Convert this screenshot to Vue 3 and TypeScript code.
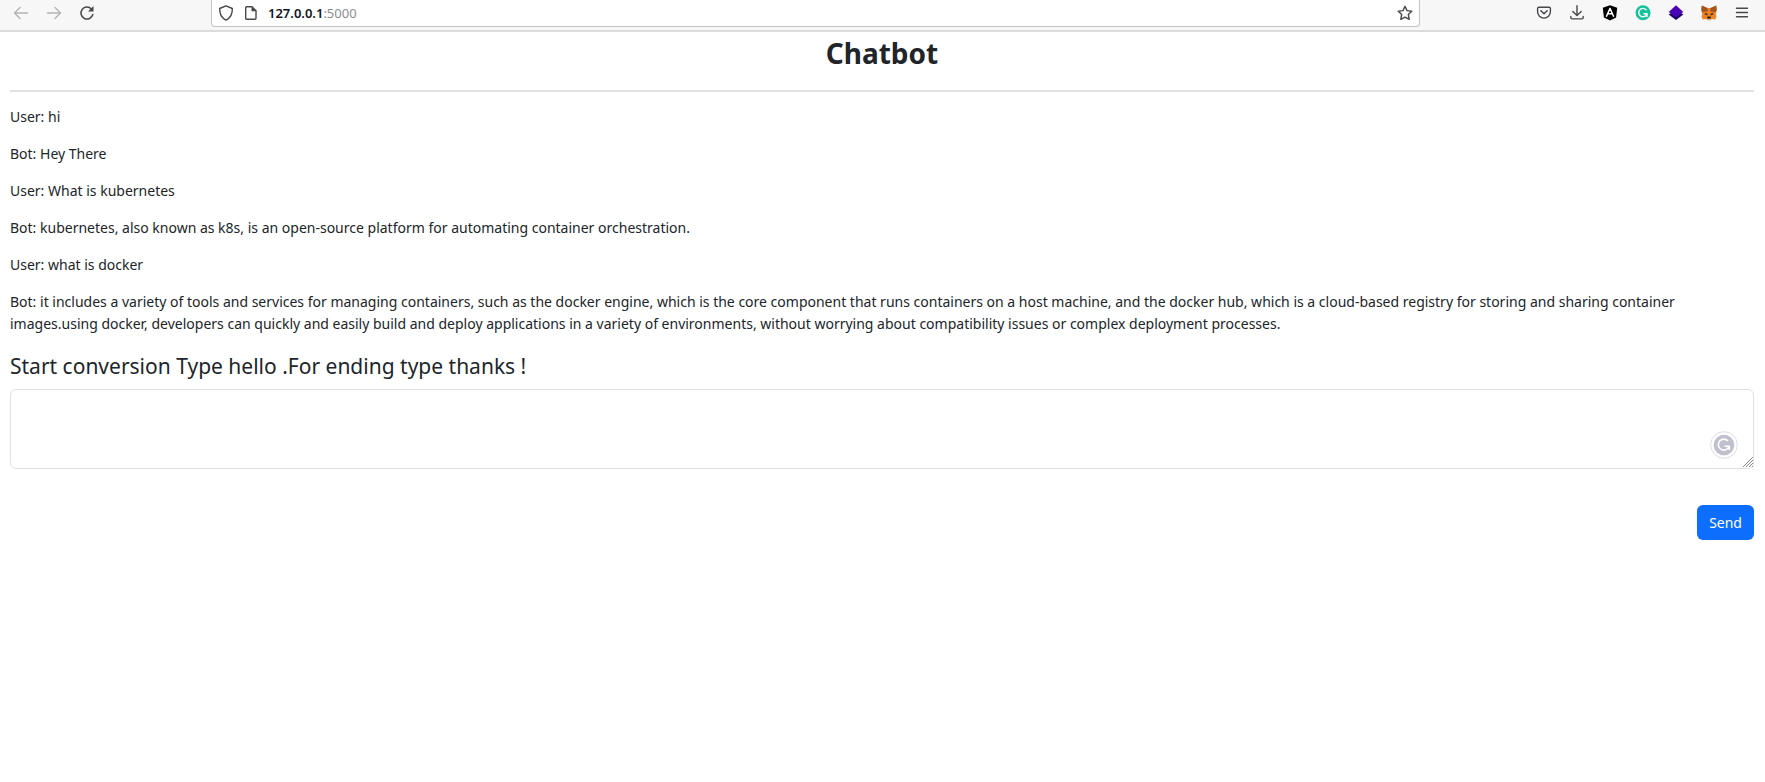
<script setup lang="ts">
import { ref } from 'vue'

interface Message {
  from: 'User' | 'Bot'
  text: string
}

const messages = ref<Message[]>([
  { from: 'User', text: 'hi' },
  { from: 'Bot', text: 'Hey There' },
  { from: 'User', text: 'What is kubernetes' },
  {
    from: 'Bot',
    text: 'kubernetes, also known as k8s, is an open-source platform for automating container orchestration.',
  },
  { from: 'User', text: 'what is docker' },
  {
    from: 'Bot',
    text: 'it includes a variety of tools and services for managing containers, such as the docker engine, which is the core component that runs containers on a host machine, and the docker hub, which is a cloud-based registry for storing and sharing container images.using docker, developers can quickly and easily build and deploy applications in a variety of environments, without worrying about compatibility issues or complex deployment processes.',
  },
])
const draft = ref('')

function send() {
  const text = draft.value.trim()
  if (!text) return
  messages.value.push({ from: 'User', text })
  draft.value = ''
}
</script>

<template>
  <div class="window">
    <header class="toolbar">
      <nav class="nav" aria-label="Navigation">
        <button class="tool dim" type="button" aria-label="Back">
          <svg viewBox="0 0 16 16"><path d="M14.5 8h-13M7 2.5 1.5 8 7 13.5" /></svg>
        </button>
        <button class="tool dim" type="button" aria-label="Forward">
          <svg viewBox="0 0 16 16"><path d="M1.5 8h13M9 2.5 14.5 8 9 13.5" /></svg>
        </button>
        <button class="tool" type="button" aria-label="Reload">
          <svg viewBox="0 0 16 16">
            <path d="M13.8 9.5A6 6 0 1 1 12.4 4" stroke-width="1.5" />
            <path d="M14.5 1v5.500H9z" class="solid" />
          </svg>
        </button>
      </nav>

      <div class="address">
        <button class="tool" type="button" aria-label="Tracking protection">
          <svg viewBox="0 0 16 16">
            <path d="M8 .9 14.3 3.500C14.600 9 12 13 8 15.200 4 13 1.400 9 1.700 3.500z" />
          </svg>
        </button>
        <button class="tool" type="button" aria-label="Site information">
          <svg viewBox="0 0 16 16">
            <path d="M3.700 1.700H9l4 4v7.600a1 1 0 0 1-1 1H3.700a1 1 0 0 1-1-1V2.700a1 1 0 0 1 1-1z" />
            <path d="M8.500 1.500 13.300 6.300H8.500z" class="solid" />
          </svg>
        </button>
        <div class="url" role="textbox" aria-label="Address" contenteditable="true" spellcheck="false"><span class="host">127.0.0.1</span><span>:5000</span></div>
        <button class="tool" type="button" aria-label="Bookmark this page">
          <svg viewBox="0 0 16 16">
            <path d="m8 1.300 2 4.300 4.800.600-3.500 3.300.900 4.900L8 12.100l-4.200 2.300.900-4.900L1.200 6.200 6 5.600z" />
          </svg>
        </button>
      </div>

      <div class="extensions">
        <button class="tool" type="button" aria-label="Save to Pocket">
          <svg viewBox="0 0 16 16">
            <path d="M2.800 2.200h10.400c.700 0 1.200.500 1.200 1.200v3.300a6.400 6.400 0 0 1-12.800 0V3.400c0-.700.500-1.200 1.200-1.200z" />
            <path d="M4.900 5.800 8 8.700l3.100-2.900" stroke-width="1.500" />
          </svg>
        </button>
        <button class="tool" type="button" aria-label="Downloads">
          <svg viewBox="0 0 16 16">
            <path d="M8 .8v9.700M3.800 6.500 8 10.500l4.200-4M1.800 11.500v1c0 .9.500 1.400 1.400 1.400h9.600c.9 0 1.400-.5 1.400-1.400v-1" />
          </svg>
        </button>
        <button class="tool" type="button" aria-label="Angular DevTools">
          <svg viewBox="0 0 16 16">
            <path d="M8 .3 15.200 2.800l-1.100 9.600L8 15.600l-6.100-3.200L.8 2.800z" fill="#000" stroke="none" />
            <path d="M4.500 11.200 8 3.400l3.500 7.800M5.800 8.800h4.400" stroke="#fff" stroke-width="1.500" />
          </svg>
        </button>
        <button class="tool" type="button" aria-label="Grammarly">
          <svg viewBox="0 0 16 16">
            <circle cx="8" cy="7.700" r="7.500" fill="#15c39a" stroke="none" />
            <path d="M11 4.700A4.200 4.200 0 1 0 12 8.700H9M12 8.400v3" stroke="#fff" stroke-width="1.400" />
          </svg>
        </button>
        <button class="tool" type="button" aria-label="Layers">
          <svg viewBox="0 0 16 16">
            <path d="M.700 9.400 8 5l7.300 4.400L8 15z" fill="#1d0068" stroke="none" />
            <path d="M8 .3 15.300 6.900 8 12.300.700 6.900z" fill="#4b04b5" stroke="none" />
          </svg>
        </button>
        <button class="tool" type="button" aria-label="MetaMask">
          <svg viewBox="0 0 16 16" class="fox">
            <path d="m.8.4 5.500 2.700h3.400L15.200.4l.5 4.500-1 4.200.8 2.500-1.200 3-3.300-.7-2 1.300H7l-2-1.300-3.300.7L.5 11.600l.8-2.500-1-4.200z" fill="#ee8326" />
            <path d="m.8.4 5.500 2.700.8 3.200-5.700.9L.3 4.900zM15.200.4 9.700 3.100l-.8 3.200 5.700.9 1.100-2.300z" fill="#a45322" />
            <path d="m4 7.800 2.800 1-.5 1.600-2.600-.8zM12 7.800l-2.800 1 .5 1.600 2.600-.8z" fill="#5a351f" />
            <path d="m6.300 11.900.5-.5h2.400l.5.500.2 1.600H6.100z" fill="#251b17" />
            <path d="m5 13.800 2 .2h2l2-.2-1.800 1.300H6.800z" fill="#cfb8a7" />
          </svg>
        </button>
        <button class="tool" type="button" aria-label="Open menu">
          <svg viewBox="0 0 16 16"><path d="M2.500 3.200h11M2.500 7.500h11M2.500 11.800h11" /></svg>
        </button>
      </div>
    </header>

    <main class="page">
      <h1>Chatbot</h1>
      <hr />
      <section class="log" aria-label="Conversation">
        <p v-for="(message, i) in messages" :key="i">{{ message.from }}: {{ message.text }}</p>
      </section>
      <form @submit.prevent="send">
        <label for="message">Start conversion Type hello .For ending type thanks !</label>
        <div class="field">
          <textarea id="message" v-model="draft"></textarea>
          <button class="assistant" type="button" aria-label="Writing assistant">
            <svg viewBox="0 0 28 28">
              <circle cx="14" cy="14" r="13.300" fill="#fff" stroke="#dddde8" />
              <circle cx="14" cy="14" r="10.300" fill="#bfbfce" />
              <path d="M18 10A5.500 5.500 0 1 0 19 15.500M14.500 15.200H19.300V19" fill="none" stroke="#fff" stroke-width="1.600" />
            </svg>
          </button>
          <svg class="grip" viewBox="0 0 10 10" aria-hidden="true">
            <path d="M0 10 10 0M3 10l7-7M6 10l4-4M9 10l1-1" />
          </svg>
        </div>
        <button class="send" type="submit">Send</button>
      </form>
    </main>
  </div>
</template>

<style>
body {
  margin: 0;
  background: #fff;
}
</style>

<style scoped>
.window {
  color: #212529;
  font-family: "Noto Sans", "Open Sans", sans-serif;
  font-size: 14px;
  line-height: 22px;
}

.window *,
.window *::before {
  box-sizing: border-box;
}

button {
  font: inherit;
  cursor: pointer;
}

.toolbar {
  display: flex;
  align-items: flex-start;
  height: 32px;
  padding-right: 15px;
  background: #f7f7f7;
  border-bottom: 2px solid #dcdcdc;
}

.nav {
  display: flex;
  flex: 0 0 211px;
  gap: 17px;
  padding: 5px 0 0 13px;
}

.tool {
  display: flex;
  flex: none;
  width: 16px;
  height: 16px;
  padding: 0;
  color: #48484c;
  background: none;
  border: 0;
}

.tool svg {
  width: 16px;
  height: 16px;
  fill: none;
  stroke: currentColor;
  stroke-width: 1.4;
  stroke-linecap: round;
  stroke-linejoin: round;
}

.tool .solid {
  fill: currentColor;
  stroke: none;
}

.tool .fox {
  stroke: none;
}

.dim {
  color: #b4b4b6;
}

.address {
  display: flex;
  flex: 1;
  gap: 9px;
  height: 27px;
  padding: 5px 6px 0;
  background: #fff;
  border: 1px solid #c4c4c6;
  border-top: 0;
  border-radius: 0 0 4px 4px;
}

.url {
  flex: 1;
  color: #8c8c90;
  font-size: 13px;
  line-height: 16px;
  outline: 0;
}

.host {
  color: #15141a;
  font-weight: 600;
}

.extensions {
  display: flex;
  flex: none;
  gap: 17px;
  padding: 5px 0 0 116px;
}

.page {
  padding: 3px 11px 0 10px;
}

h1 {
  margin: 0 0 18px;
  font-size: 28px;
  font-weight: 700;
  line-height: 37px;
  text-align: center;
}

hr {
  height: 2px;
  margin: 0 0 14px;
  background: #e1e2e3;
  border: 0;
}

p {
  margin: 0 0 15px;
}

label {
  display: block;
  padding-top: 1px;
  margin-bottom: 8px;
  font-size: 21px;
  line-height: 30px;
}

.field {
  position: relative;
}

textarea {
  display: block;
  width: 100%;
  height: 80px;
  padding: 6px 11px;
  color: inherit;
  font: inherit;
  border: 1px solid #dee2e6;
  border-radius: 6px;
  outline: 0;
  resize: none;
}

.assistant {
  position: absolute;
  right: 16px;
  bottom: 10px;
  width: 28px;
  height: 28px;
  padding: 0;
  background: none;
  border: 0;
}

.assistant svg {
  display: block;
}

.grip {
  position: absolute;
  right: 1px;
  bottom: 2px;
  width: 10px;
  height: 10px;
  stroke: #8a8a8a;
}

.send {
  display: block;
  height: 35px;
  margin: 36px 0 0 auto;
  padding: 0 12px;
  color: #fff;
  background: #0d6efd;
  border: 0;
  border-radius: 6px;
}
</style>
